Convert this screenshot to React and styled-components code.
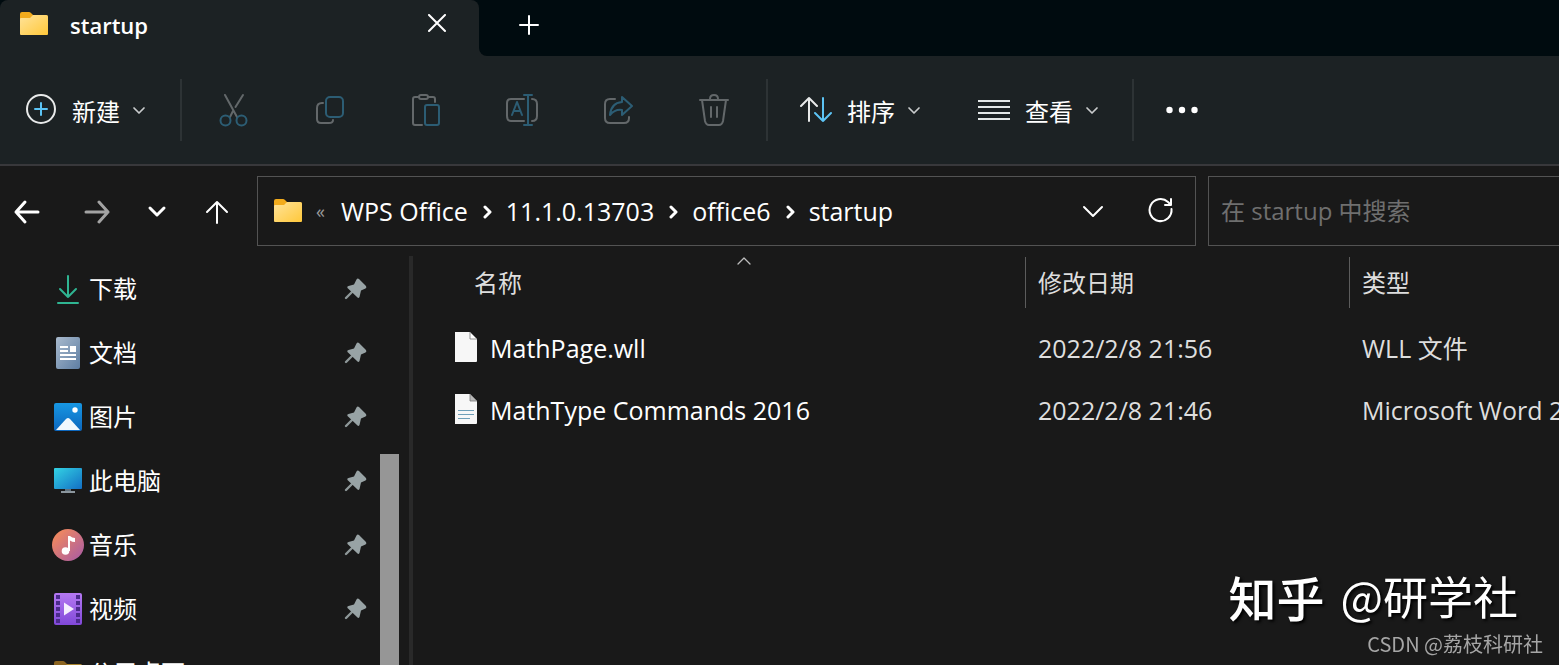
import React from "react";
import styled, { createGlobalStyle } from "styled-components";

const UI_FONT = `"Open Sans", "Noto Sans", "Noto Sans CJK SC", sans-serif`;

const GlobalStyle = createGlobalStyle`
  * { box-sizing: border-box; }
  body { margin: 0; background: #191919; overflow: hidden; }
  button, input { font: inherit; color: inherit; }
  button { border: 0; background: none; padding: 0; cursor: default; }
  svg { display: block; flex: none; }
`;

const Window = styled.div`
  display: flex;
  flex-direction: column;
  height: 100vh;
  overflow: hidden;
  background: #191919;
  color: #fff;
  font: 24px/32px ${UI_FONT};
  white-space: nowrap;
`;

/* ---------- tab strip ---------- */
const TabStrip = styled.header`
  display: flex;
  flex: none;
  height: 56px;
  background: #000b0f;
`;
const Tab = styled.div`
  display: flex;
  align-items: center;
  width: 479px;
  padding: 0 32px 8px 19px;
  border-radius: 8px 8px 0 0;
  background: #1c2224;
`;
const TabTitle = styled.span`
  flex: 1;
  margin-left: 21px;
  padding-top: 2px;
  font-size: 22px;
  font-weight: 600;
`;
const TabRest = styled.div`
  display: flex;
  flex: 1;
  align-items: center;
  padding: 0 0 6px 40px;
  border-bottom-left-radius: 8px;
  background: #000b0f;
`;
const TabBack = styled.div`
  display: flex;
  flex: 1;
  background: linear-gradient(#000b0f 50%, #1c2224 50%);
`;

/* ---------- command bar ---------- */
const CommandBar = styled.div`
  display: flex;
  flex: none;
  align-items: center;
  height: 110px;
  border-bottom: 2px solid #38383b;
  background: #1c2224;
`;
const CommandButton = styled.button`
  display: flex;
  align-items: center;
  height: 64px;
  padding: 0 ${(p) => p.$end}px 0 ${(p) => p.$start}px;
`;
const CommandLabel = styled.span`
  margin: 0 12px 0 15px;
  padding-top: 4px;
`;
const IconButton = styled.button`
  display: flex;
  align-items: center;
  justify-content: center;
  width: 96px;
  height: 64px;
`;
const Divider = styled.span`
  width: 2px;
  height: 62px;
  margin: 0 ${(p) => p.$after || 0}px 0 ${(p) => p.$before || 0}px;
  background: #2d3335;
`;

/* ---------- navigation row ---------- */
const NavRow = styled.nav`
  display: flex;
  flex: none;
  height: 90px;
  padding: 10px 0;
`;
const NavButton = styled.button`
  display: flex;
  align-items: center;
  padding: ${(p) => (p.$first ? "2px 26px 0 13px" : "2px 16px 0")};
  opacity: ${(p) => (p.disabled ? 0.6 : 1)};
`;
const AddressBar = styled.div`
  display: flex;
  flex: 1;
  align-items: center;
  margin: 0 12px 0 10px;
  padding: 0 20px 0 15px;
  border: 1px solid #535353;
`;
const Overflow = styled.button`
  margin: 0 16px 0 13px;
  color: #9a9a9a;
  font-size: 18px;
`;
const Crumb = styled.a`
  color: inherit;
  font-size: 25px;
  text-decoration: none;
`;
const CrumbArrow = styled.svg`
  margin: 0 12px;
`;
const AddressButton = styled.button`
  display: flex;
  margin-left: ${(p) => (p.$push ? "auto" : "42px")};
  padding-bottom: 3px;
`;
const Search = styled.input`
  flex: 0 0 351px;
  width: 351px;
  padding: 0 12px;
  border: 1px solid #535353;
  border-right: 0;
  border-radius: 0;
  outline: 0;
  background: transparent;
  &::placeholder { color: #6f6f6f; opacity: 1; }
`;

/* ---------- body ---------- */
const Body = styled.div`
  display: flex;
  flex: 1;
  min-height: 0;
`;
const Sidebar = styled.aside`
  display: flex;
  flex: 0 0 413px;
  border-right: 4px solid #292929;
  overflow: hidden;
`;
const Places = styled.ul`
  flex: 1;
  margin: 0;
  padding: 1px 0 0;
  list-style: none;
`;
const Place = styled.li`
  display: flex;
  align-items: center;
  height: 64px;
  padding: 0 12px 0 52px;
`;
const PlaceLink = styled.a`
  display: flex;
  flex: 1;
  align-items: center;
  gap: 5px;
  color: inherit;
  text-decoration: none;
`;
const ScrollTrack = styled.div`
  width: 19px;
  margin-right: 10px;
  padding-top: 198px;
`;
const ScrollThumb = styled.div`
  height: 100%;
  background: #969696;
`;
const Main = styled.main`
  flex: 1;
  min-width: 0;
  overflow: hidden;
`;
const Files = styled.table`
  width: 100%;
  table-layout: fixed;
  border-collapse: collapse;
`;
const HeadCell = styled.th`
  position: relative;
  width: ${(p) => p.$width || "auto"};
  height: 61px;
  padding: 1px 0 0;
  text-align: left;
  vertical-align: top;
  font-weight: 400;
  color: #dedede;
`;
const HeadLabel = styled.div`
  height: 51px;
  padding: 10px 0 0 ${(p) => (p.$first ? 61 : 12)}px;
  border-left: ${(p) => (p.$first ? 0 : "1px solid #5c5c5c")};
`;
const SortMark = styled.svg`
  position: absolute;
  top: 0;
  left: 50px;
  right: 0;
  margin: 0 auto;
`;
const Cell = styled.td`
  height: 62px;
  padding: 0 0 0 13px;
  font-size: 25px;
  color: #dedede;
`;
const NameCell = styled(Cell)`
  padding-left: 41px;
  color: #fff;
`;
const FileName = styled.div`
  display: flex;
  align-items: center;
  gap: 12px;
`;

/* ---------- watermarks ---------- */
const Watermark = styled.div`
  position: fixed;
  right: 16px;
  bottom: 7px;
  display: flex;
  flex-direction: column;
  align-items: flex-end;
  font-family: "Noto Sans CJK SC", sans-serif;
`;
const Author = styled.div`
  display: flex;
  align-items: center;
  gap: 16px;
  margin: 0 25px 2px 0;
  font-size: 45px;
  line-height: 64px;
  text-shadow: 2px 2px 3px #000;
`;
const Brand = styled.span`
  font-size: 48px;
  font-weight: 500;
`;
const Credit = styled.div`
  font-size: 20px;
  line-height: 28px;
  color: #a6a6a6;
`;

/* ---------- icons ---------- */
const line = { fill: "none", strokeLinecap: "round", strokeLinejoin: "round" };
const GREY = "#63686a";
const TEAL = "#2c5d74";

const Folder = ({ dim }) => (
  <svg width="30" height="26" viewBox="0 0 30 26">
    <defs>
      <linearGradient id="folder" x1="0" y1="0" x2="1" y2="1">
        <stop offset="0" stopColor="#ffe39a" />
        <stop offset="1" stopColor="#ffc83a" />
      </linearGradient>
    </defs>
    <path d="M1 3q0-2 2-2h7q1 0 2 1l2 2h13q2 0 2 2v4H1z" fill={dim ? "#8b6420" : "#f2ab1c"} />
    <path d="M1 8q0-1 1-1h9l3-3h13q2 0 2 2v17q0 1-1 1H2q-1 0-1-1z" fill={dim ? "#a8842e" : "url(#folder)"} />
  </svg>
);
const Chevron = () => (
  <svg width="14" height="14" {...line} stroke="#c9cccd" strokeWidth="1.7"><path d="M2 5l5 5 5-5" /></svg>
);
const NewIcon = () => (
  <svg width="32" height="32" {...line} strokeWidth="2">
    <circle cx="16" cy="15" r="14" stroke="#e8eaea" />
    <path d="M16 9v12M10 15h12" stroke="#5cc4f5" />
  </svg>
);
const Cut = () => (
  <svg width="32" height="34" {...line} strokeWidth="2">
    <path d="M7 2l12 22M25 2l-7.500 12M15 18l-3 6" stroke={GREY} />
    <circle cx="7.500" cy="27.500" r="5" stroke={TEAL} />
    <circle cx="23.500" cy="27.500" r="5" stroke={TEAL} />
  </svg>
);
const Copy = () => (
  <svg width="32" height="34" {...line} strokeWidth="2">
    <rect x="12" y="4" width="17" height="20" rx="4" stroke={TEAL} />
    <path d="M9 10H8q-5 0-5 5v11q0 4 4 4h8q4 0 4-3" stroke={GREY} />
  </svg>
);
const Paste = () => (
  <svg width="32" height="34" {...line} strokeWidth="2">
    <path d="M9 4H5q-2 0-2 2v24q0 2 2 2h7M18 4h5q2 0 2 2v3" stroke={GREY} />
    <rect x="9" y="2" width="9" height="4" rx="2" stroke={GREY} />
    <rect x="15" y="12" width="14" height="20" rx="2" stroke={TEAL} />
  </svg>
);
const Rename = () => (
  <svg width="34" height="34" {...line} strokeWidth="2">
    <path d="M19 6H6q-4 0-4 4v13q0 5 4 5h13M27 6q5 0 5 5v12q0 5-5 5" stroke={GREY} />
    <path d="M7 22l5-13 5 13M9 18h6M19 2h8M23 2v30M19 32h8" stroke={TEAL} />
  </svg>
);
const Share = () => (
  <svg width="32" height="34" {...line} strokeWidth="2">
    <path d="M13 6H8q-5 0-5 5v14q0 5 5 5h14q5 0 5-5v-1" stroke={GREY} />
    <path d="M20 4l10 9-10 9v-5q-7-1-12 5 1-12 12-13z" stroke={TEAL} />
  </svg>
);
const Trash = () => (
  <svg width="32" height="34" {...line} strokeWidth="2" stroke={GREY}>
    <path d="M2 7h28M12 6q0-4 4-4t4 4M4 7l3 21q1 4 4 4h10q3 0 4-4l3-21M13 14v10M19 14v10" />
  </svg>
);
const Sort = () => (
  <svg width="32" height="32" {...line} strokeWidth="2">
    <path d="M9 27V4M1 12l8-8 8 8" stroke="#e8eaea" />
    <path d="M23 4v23M15 19l8 8 8-8" stroke="#5cc4f5" />
  </svg>
);
const View = () => (
  <svg width="32" height="32" stroke="#e3e8e8" strokeWidth="2"><path d="M0 7h32M0 13h32M0 19h32M0 25h32" /></svg>
);
const Dots = () => (
  <svg width="32" height="32" fill="#fff">
    <circle cx="3.500" cy="16" r="3.200" /><circle cx="16" cy="16" r="3.200" /><circle cx="28.500" cy="16" r="3.200" />
  </svg>
);
const Nav = ({ d, w = 3 }) => (
  <svg width="28" height="28" {...line} stroke="#fff" strokeWidth={w}><path d={d} /></svg>
);
const Arrow = () => (
  <CrumbArrow width="14" height="16" {...line} stroke="#fff" strokeWidth="3"><path d="M5 4l5 5-5 5" /></CrumbArrow>
);
const Pin = () => (
  <svg width="24" height="24" viewBox="0 0 24 24">
    <path d="M2 21l7-7" stroke="#8e9899" strokeWidth="2.400" strokeLinecap="round" />
    <path d="M12.500 2.500q1-1.500 2.500-.5l7 7q1 1.500-.5 2.500L17 13.500l-1.500 6.500q-1 1.500-2 .5l-10-9.500q-1-1.500 1-2L10 7.500z" fill="#98a3a5" />
  </svg>
);

const placeArt = {
  download: (
    <g {...line} stroke="#2fb592" strokeWidth="2"><path d="M16 3v21M8 16l8 8 8-8M6 30h20" /></g>
  ),
  document: (
    <>
      <defs><linearGradient id="doc" x1="0" y1="0" x2="1" y2="1"><stop offset="0" stopColor="#a9bacd" /><stop offset="1" stopColor="#5e7ea3" /></linearGradient></defs>
      <rect x="4" y="0" width="24" height="32" rx="2" fill="url(#doc)" />
      <path d="M8 10h8M8 14h8M8 18h16M8 22h16" stroke="#fff" strokeWidth="2" />
      <rect x="18" y="9" width="6" height="6" fill="#fff" />
    </>
  ),
  picture: (
    <>
      <defs><linearGradient id="pic" x1="0" y1="0" x2="0" y2="1"><stop offset="0" stopColor="#1797e3" /><stop offset="1" stopColor="#0c66bd" /></linearGradient></defs>
      <rect x="2" y="2" width="28" height="28" rx="2" fill="url(#pic)" />
      <path d="M4 29l10-11q2-2 4 0l10 11z" fill="#f1f8fd" />
      <circle cx="23" cy="9" r="2.700" fill="#fff" />
    </>
  ),
  computer: (
    <>
      <defs><linearGradient id="pc" x1="0" y1="0" x2="1" y2="1"><stop offset="0" stopColor="#33d3e4" /><stop offset="1" stopColor="#136fc4" /></linearGradient></defs>
      <rect x="2" y="3" width="28" height="21" rx="1" fill="url(#pc)" />
      <path d="M13 24h6v2H13z" fill="#60707c" />
      <path d="M9 27h14" stroke="#8b969e" strokeWidth="2" />
    </>
  ),
  music: (
    <>
      <defs><linearGradient id="mus" x1="0" y1="0" x2="1" y2="1"><stop offset=".15" stopColor="#ef8760" /><stop offset="1" stopColor="#a559a8" /></linearGradient></defs>
      <circle cx="16" cy="16" r="16" fill="url(#mus)" />
      <circle cx="13.500" cy="22" r="3.800" fill="#fff" />
      <path d="M16 22V7h2q2 2 5 2v4q-3 0-5-1.500V22z" fill="#fff" />
    </>
  ),
  video: (
    <>
      <defs><linearGradient id="vid" x1="0" y1="0" x2="0" y2="1"><stop offset="0" stopColor="#b579f2" /><stop offset="1" stopColor="#8048d8" /></linearGradient></defs>
      <rect x="2" y="0" width="28" height="32" rx="2" fill="url(#vid)" />
      <path d="M6 2v30M26 2v30" stroke="#4b2a8c" strokeWidth="4" strokeDasharray="4 2" />
      <path d="M12 9.500v13l10-6.500z" fill="#f5effe" />
    </>
  ),
};
const PlaceIcon = ({ kind }) => (
  <svg width="32" height="32" viewBox="0 0 32 32">
    {kind === "folder" ? <g transform="translate(1 3)"><Folder dim /></g> : placeArt[kind]}
  </svg>
);
const FileIcon = ({ lined }) => (
  <svg width="24" height="32" viewBox="0 0 24 32">
    <path d="M1 0h15l7 7v22q0 1-1 1H1z" fill="#f7f7f7" />
    <path d="M16 0v7h7z" fill={lined ? "#b9b9b9" : "#fff"} stroke="#777" strokeWidth=".8" />
    {lined && <path d="M4 16.500h16M4 20.500h16M4 24.500h12" stroke="#6f9fb8" />}
  </svg>
);

/* ---------- data ---------- */
const tools = [
  ["剪切", Cut], ["复制", Copy], ["粘贴", Paste], ["重命名", Rename], ["共享", Share], ["删除", Trash],
];
const crumbs = ["WPS Office", "11.1.0.13703", "office6", "startup"];
const places = [
  ["下载", "download"], ["文档", "document"], ["图片", "picture"], ["此电脑", "computer"],
  ["音乐", "music"], ["视频", "video"], ["公用桌面", "folder"],
];
const files = [
  { name: "MathPage.wll", date: "2022/2/8 21:56", type: "WLL 文件" },
  { name: "MathType Commands 2016", date: "2022/2/8 21:46", type: "Microsoft Word 2", lined: true },
];

export default function App() {
  return (
    <Window>
      <GlobalStyle />
      <TabStrip>
        <Tab>
          <Folder />
          <TabTitle>startup</TabTitle>
          <button aria-label="关闭标签页">
            <svg width="20" height="20" {...line} stroke="#fff" strokeWidth="2"><path d="M2 1l16 16M18 1L2 17" /></svg>
          </button>
        </Tab>
        <TabBack>
          <TabRest>
            <button aria-label="新建标签页">
              <svg width="20" height="20" {...line} stroke="#fff" strokeWidth="2"><path d="M10 1v18M1 10h18" /></svg>
            </button>
          </TabRest>
        </TabBack>
      </TabStrip>

      <CommandBar>
        <CommandButton $start={25} $end={34}><NewIcon /><CommandLabel>新建</CommandLabel><Chevron /></CommandButton>
        <Divider $after={4} />
        {tools.map(([label, Icon]) => (
          <IconButton key={label} aria-label={label} disabled><Icon /></IconButton>
        ))}
        <Divider $before={4} />
        <CommandButton $start={32} $end={25}><Sort /><CommandLabel>排序</CommandLabel><Chevron /></CommandButton>
        <CommandButton $start={32} $end={33}><View /><CommandLabel>查看</CommandLabel><Chevron /></CommandButton>
        <Divider />
        <CommandButton $start={32} $end={32} aria-label="更多"><Dots /></CommandButton>
      </CommandBar>

      <NavRow>
        <NavButton $first aria-label="后退"><Nav d="M25 14H3M12 4L3 14l9 10" /></NavButton>
        <NavButton disabled aria-label="前进"><Nav d="M3 14h22M16 4l9 10-9 10" /></NavButton>
        <NavButton aria-label="最近位置"><Nav d="M7 10l7 7 7-7" /></NavButton>
        <NavButton aria-label="向上"><Nav w={2} d="M14 25V4M4 14L14 4l10 10" /></NavButton>
        <AddressBar>
          <Folder />
          <Overflow>«</Overflow>
          {crumbs.map((name, i) => (
            <React.Fragment key={name}>
              {i > 0 && <Arrow />}
              <Crumb href="#">{name}</Crumb>
            </React.Fragment>
          ))}
          <AddressButton $push aria-label="历史记录">
            <svg width="24" height="24" {...line} stroke="#fff" strokeWidth="2"><path d="M3 9l9 9 9-9" /></svg>
          </AddressButton>
          <AddressButton aria-label="刷新">
            <svg width="28" height="28" {...line} stroke="#fff" strokeWidth="2"><path d="M24.500 13a11 11 0 1 1-3.500-7l3 3M24 3v6h-6" /></svg>
          </AddressButton>
        </AddressBar>
        <Search type="search" aria-label="搜索" placeholder="在 startup 中搜索" />
      </NavRow>

      <Body>
        <Sidebar>
          <Places>
            {places.map(([label, kind]) => (
              <Place key={label}>
                <PlaceLink href="#"><PlaceIcon kind={kind} />{label}</PlaceLink>
                {kind !== "folder" && <Pin />}
              </Place>
            ))}
          </Places>
          <ScrollTrack><ScrollThumb /></ScrollTrack>
        </Sidebar>
        <Main>
          <Files>
            <thead>
              <tr>
                <HeadCell $width="612px">
                  <HeadLabel $first>名称</HeadLabel>
                  <SortMark width="16" height="10" {...line} stroke="#bdbdbd" strokeWidth="1.300"><path d="M2 8l6-6 6 6" /></SortMark>
                </HeadCell>
                <HeadCell $width="324px"><HeadLabel>修改日期</HeadLabel></HeadCell>
                <HeadCell><HeadLabel>类型</HeadLabel></HeadCell>
              </tr>
            </thead>
            <tbody>
              {files.map((f) => (
                <tr key={f.name}>
                  <NameCell><FileName><FileIcon lined={f.lined} />{f.name}</FileName></NameCell>
                  <Cell>{f.date}</Cell>
                  <Cell>{f.type}</Cell>
                </tr>
              ))}
            </tbody>
          </Files>
        </Main>
      </Body>

      <Watermark>
        <Author><Brand>知乎</Brand>@研学社</Author>
        <Credit>CSDN @荔枝科研社</Credit>
      </Watermark>
    </Window>
  );
}
